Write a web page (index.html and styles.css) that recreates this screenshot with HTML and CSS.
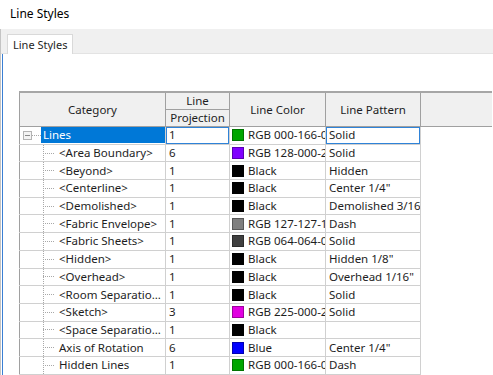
FILE: index.html
```html
<!DOCTYPE html>
<html lang="en">
<head>
    <meta charset="UTF-8">
    <meta name="viewport" content="width=device-width, initial-scale=1.0">
    <title>Line Styles</title>
    <link rel="stylesheet" href="styles.css">
</head>
<body>
    <div class="titlebar">Line Styles</div>
    <div class="frame">
        <div class="tabs">
            <div class="tab">Line Styles</div>
        </div>
        <div class="content">
            <table class="grid">
                <colgroup>
                    <col class="c-cat">
                    <col class="c-proj">
                    <col class="c-color">
                    <col class="c-pat">
                    <col class="c-rest">
                </colgroup>
                <thead>
                    <tr class="head-top">
                        <th rowspan="2">Category</th>
                        <th class="split">Line</th>
                        <th rowspan="2">Line Color</th>
                        <th rowspan="2">Line Pattern</th>
                        <th rowspan="2" class="filler"></th>
                    </tr>
                    <tr class="head-bottom">
                        <th>Projection</th>
                    </tr>
                </thead>
                <tbody>
                    <tr>
                        <td class="cat root">
                            <div class="root-cell">
                                <span class="toggle"></span>
                                <span class="link"></span>
                                <span class="selected">Lines</span>
                            </div>
                        </td>
                        <td class="focus">1</td>
                        <td class="color"><span class="swatch" style="background:#00a600"></span>RGB 000-166-000</td>
                        <td class="focus">Solid</td>
                    </tr>
                    <tr>
                        <td class="cat child">&lt;Area Boundary&gt;</td>
                        <td>6</td>
                        <td class="color"><span class="swatch" style="background:#8000ff"></span>RGB 128-000-255</td>
                        <td>Solid</td>
                    </tr>
                    <tr>
                        <td class="cat child">&lt;Beyond&gt;</td>
                        <td>1</td>
                        <td class="color"><span class="swatch" style="background:#000"></span>Black</td>
                        <td>Hidden</td>
                    </tr>
                    <tr>
                        <td class="cat child">&lt;Centerline&gt;</td>
                        <td>1</td>
                        <td class="color"><span class="swatch" style="background:#000"></span>Black</td>
                        <td>Center 1/4"</td>
                    </tr>
                    <tr>
                        <td class="cat child">&lt;Demolished&gt;</td>
                        <td>1</td>
                        <td class="color"><span class="swatch" style="background:#000"></span>Black</td>
                        <td>Demolished 3/16"</td>
                    </tr>
                    <tr>
                        <td class="cat child">&lt;Fabric Envelope&gt;</td>
                        <td>1</td>
                        <td class="color"><span class="swatch" style="background:#7f7f7f"></span>RGB 127-127-127</td>
                        <td>Dash</td>
                    </tr>
                    <tr>
                        <td class="cat child">&lt;Fabric Sheets&gt;</td>
                        <td>1</td>
                        <td class="color"><span class="swatch" style="background:#404040"></span>RGB 064-064-064</td>
                        <td>Solid</td>
                    </tr>
                    <tr>
                        <td class="cat child">&lt;Hidden&gt;</td>
                        <td>1</td>
                        <td class="color"><span class="swatch" style="background:#000"></span>Black</td>
                        <td>Hidden 1/8"</td>
                    </tr>
                    <tr>
                        <td class="cat child">&lt;Overhead&gt;</td>
                        <td>1</td>
                        <td class="color"><span class="swatch" style="background:#000"></span>Black</td>
                        <td>Overhead 1/16"</td>
                    </tr>
                    <tr>
                        <td class="cat child">&lt;Room Separation Lines&gt;</td>
                        <td>1</td>
                        <td class="color"><span class="swatch" style="background:#000"></span>Black</td>
                        <td>Solid</td>
                    </tr>
                    <tr>
                        <td class="cat child">&lt;Sketch&gt;</td>
                        <td>3</td>
                        <td class="color"><span class="swatch" style="background:#e100e1"></span>RGB 225-000-225</td>
                        <td>Solid</td>
                    </tr>
                    <tr>
                        <td class="cat child">&lt;Space Separation Lines&gt;</td>
                        <td>1</td>
                        <td class="color"><span class="swatch" style="background:#000"></span>Black</td>
                        <td></td>
                    </tr>
                    <tr>
                        <td class="cat child">Axis of Rotation</td>
                        <td>6</td>
                        <td class="color"><span class="swatch" style="background:#0000ff"></span>Blue</td>
                        <td>Center 1/4"</td>
                    </tr>
                    <tr>
                        <td class="cat child">Hidden Lines</td>
                        <td>1</td>
                        <td class="color"><span class="swatch" style="background:#00a600"></span>RGB 000-166-000</td>
                        <td>Dash</td>
                    </tr>
                    <tr>
                        <td class="cat child">Lines</td>
                        <td>1</td>
                        <td class="color"><span class="swatch" style="background:#000"></span>Black</td>
                        <td>Solid</td>
                    </tr>
                </tbody>
            </table>
        </div>
    </div>
</body>
</html>
```

FILE: styles.css
```css
html, body { margin: 0; height: 100%; overflow: hidden; background: #fff; }
body { font-family: "Noto Sans", "Open Sans", sans-serif; font-size: 11.5px; color: #1e1e1e; }

.titlebar { height: 29px; padding-left: 10px; line-height: 27px; font-size: 12px; color: #000; }

.frame { height: 100%; border-left: 1px solid #c4c4c4; box-shadow: inset 1px 0 0 #fff, inset 2px 0 0 #3b7fd3; }
.tabs { height: 24px; padding-left: 6px; background: #f0f0f0; border-bottom: 1px solid #e3e3e3; display: flex; align-items: flex-end; }
.tab { height: 19px; margin-bottom: -1px; padding: 0 5px; background: #fff; border: 1px solid #d9d9d9; border-bottom: none; line-height: 19px; font-size: 11px; }

.content { padding: 37px 0 0 18px; }

.grid { border-collapse: collapse; table-layout: fixed; width: 472px; }
.c-cat { width: 146px; }
.c-proj { width: 64px; }
.c-color { width: 96px; }
.c-pat { width: 95px; }
.c-rest { width: 71px; }

th { background: #f0f0f0; font-weight: normal; border: 1px solid #a0a0a0; padding: 0; text-align: center; white-space: nowrap; line-height: 14px; }
thead tr:first-child th { border-top: 2px solid #a6a6a6; }
.head-top th { height: 16px; }
.head-bottom th { height: 16px; }
.filler { border-right: none; }

td { height: 16.7px; padding: 0 0 0 3px; border: 1px solid #d0d0d0; white-space: nowrap; overflow: hidden; text-overflow: clip; line-height: 16px; }
td.cat { border-left-color: #a0a0a0; }
td.color { padding-left: 2px; }
td.focus { box-shadow: inset 0 0 0 1px #2f83d8; }

.swatch { display: inline-block; width: 12px; height: 12px; margin-right: 4px; vertical-align: -2px; box-shadow: inset 0 0 0 1px rgba(0, 0, 0, 0.3); }

.child { padding-left: 39px; text-overflow: ellipsis;
    background:
        repeating-linear-gradient(to bottom, #a8a8a8 0 1px, transparent 1px 2px) 23px 0 / 1px 100% no-repeat,
        repeating-linear-gradient(to right, #a8a8a8 0 1px, transparent 1px 2px) 23px 50% / 12px 1px no-repeat;
}

td.root { padding: 0; }
.root-cell { display: flex; align-items: center; height: 16px; }
.toggle { width: 7px; height: 7px; margin-left: 3px; border: 1px solid #b4b4b4; background: linear-gradient(#8a8a8a, #8a8a8a) center / 5px 1px no-repeat, #f4f4f4; }
.link { width: 9px; height: 1px; background: repeating-linear-gradient(to right, #a8a8a8 0 1px, transparent 1px 2px); }
.selected { flex: 1; height: 16px; padding-left: 2px; background: #0078d7; color: #fff; line-height: 16px; }
```
